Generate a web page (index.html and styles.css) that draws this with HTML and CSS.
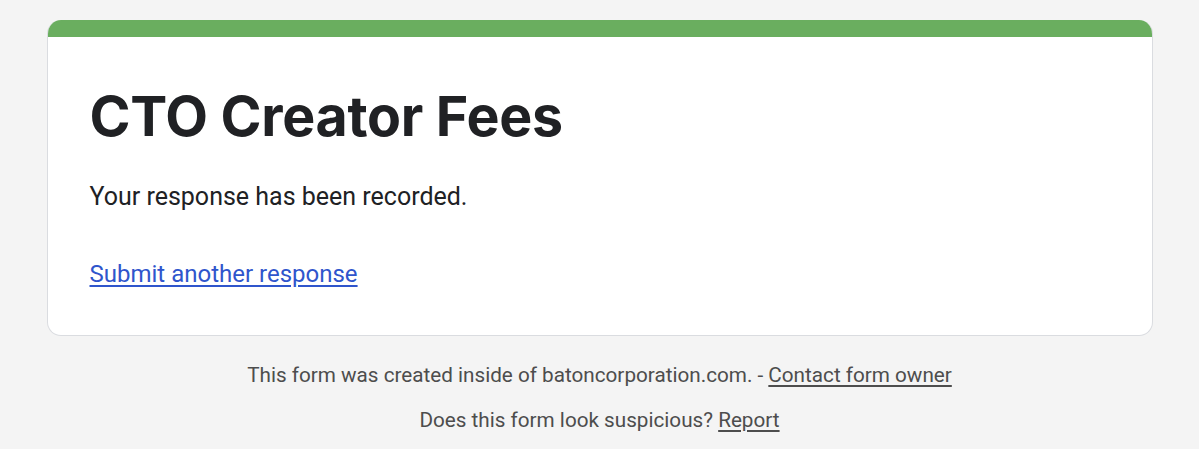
FILE: index.html
```html
<!DOCTYPE html>
<html lang="en">
<head>
<meta charset="utf-8">
<title>CTO Creator Fees</title>
<link rel="stylesheet" href="styles.css">
</head>
<body>
<main class="page">
  <section class="card">
    <div class="card-bar"></div>
    <div class="card-body">
      <h1 class="title">CTO Creator Fees</h1>
      <p class="message">Your response has been recorded.</p>
      <a class="again" href="#">Submit another response</a>
    </div>
  </section>
  <footer class="footer">
    <p class="footer-line">This form was created inside of batoncorporation.com. - <a href="#" class="footer-link">Contact form owner</a></p>
    <p class="footer-line">Does this form look suspicious? <a href="#" class="footer-link">Report</a></p>
  </footer>
</main>
</body>
</html>
```

FILE: styles.css
```css
html, body {
  margin: 0;
  padding: 0;
  background: #f4f4f4;
}
body {
  font-family: Roboto, "Liberation Sans", Arial, sans-serif;
}
.page {
  width: 1106px;
  margin: 0 auto;
  padding-top: 20px;
}
.card {
  background: #ffffff;
  border-radius: 14px;
  border: 1px solid #dadce0;
  border-top: none;
  overflow: hidden;
}
.card-bar {
  height: 17px;
  background: #6aae5f;
  margin: 0 -1px;
}
.card-body {
  padding: 44px 42px 46px 42px;
}
.title {
  margin: 0;
  font-family: Inter, "Liberation Sans", Arial, sans-serif;
  font-weight: 700;
  font-size: 55.5px;
  line-height: 70px;
  color: #202124;
  letter-spacing: -0.3px;
}
.message {
  margin: 31px 0 0 0;
  font-size: 25px;
  line-height: 30px;
  color: #202124;
}
.again {
  display: inline-block;
  margin-top: 47px;
  font-size: 24px;
  line-height: 30px;
  color: #2f55cc;
  text-decoration: underline;
  text-underline-offset: 3px;
}
.footer {
  text-align: center;
  padding-top: 25px;
}
.footer-line {
  margin: 0 0 16px 0;
  font-size: 20.7px;
  line-height: 29px;
  color: #4d4d4d;
}
.footer-link {
  color: #4d4d4d;
  text-decoration: underline;
  text-underline-offset: 3px;
}
```
